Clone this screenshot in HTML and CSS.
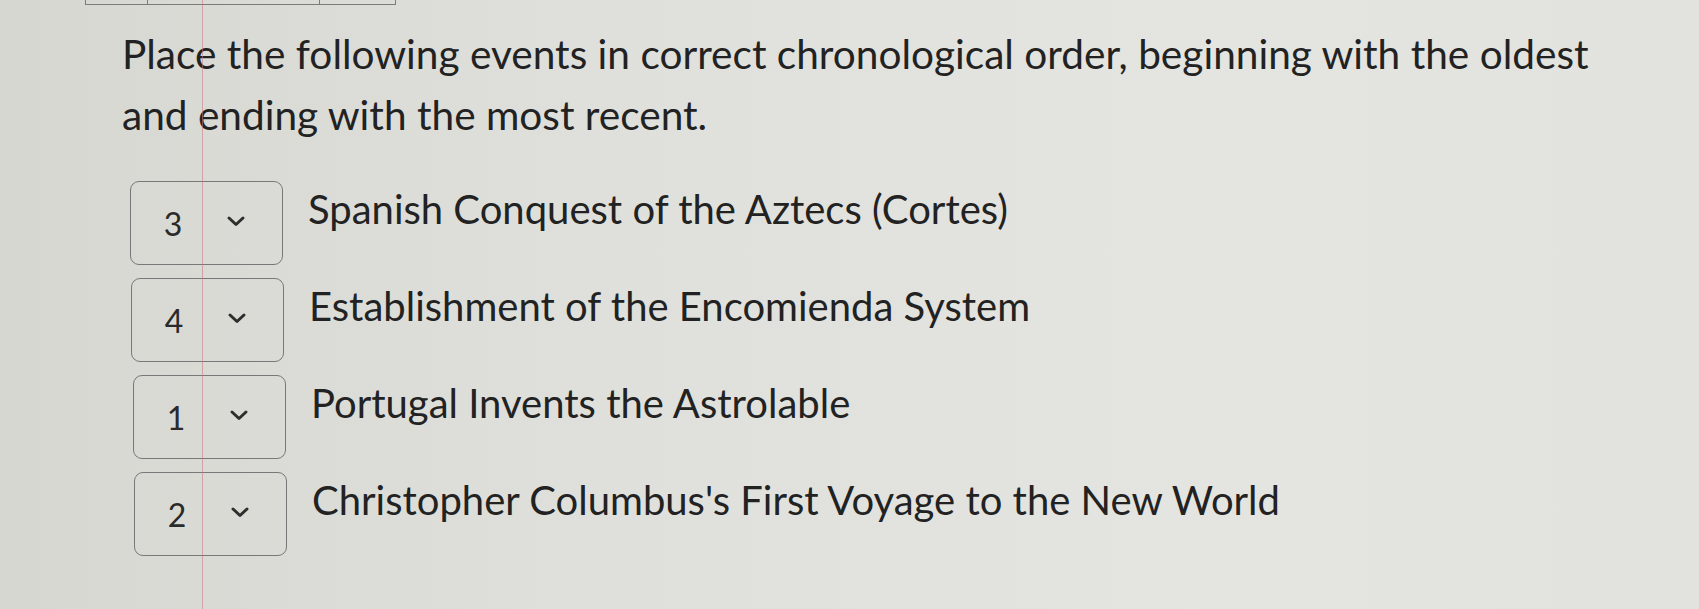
FILE: index.html
```html
<!DOCTYPE html>
<html lang="en">
<head>
  <meta charset="UTF-8" />
  <meta name="viewport" content="width=device-width, initial-scale=1.0"/>
  <title>Ordering Question</title>
  <link rel="stylesheet" href="styles.css">
</head>
<body>

  <!-- Bottom edge of the tab strip above the question -->
  <div class="tab-strip">
    <span class="tab tab-a"></span>
    <span class="tab tab-b"></span>
    <span class="tab tab-c"></span>
  </div>

  <div class="question">
    <p class="prompt">Place the following events in correct chronological order, beginning with the oldest and ending with the most recent.</p>

    <div class="order-list">
      <div class="order-item">
        <div class="order-select">
          <span class="order-value">3</span>
          <svg class="chevron" viewBox="0 0 24 15" width="24" height="15"><path d="M5 4 L12 10.5 L19 4"/></svg>
        </div>
        <span class="order-label">Spanish Conquest of the Aztecs (Cortes)</span>
      </div>

      <div class="order-item">
        <div class="order-select">
          <span class="order-value">4</span>
          <svg class="chevron" viewBox="0 0 24 15" width="24" height="15"><path d="M5 4 L12 10.5 L19 4"/></svg>
        </div>
        <span class="order-label">Establishment of the Encomienda System</span>
      </div>

      <div class="order-item">
        <div class="order-select">
          <span class="order-value">1</span>
          <svg class="chevron" viewBox="0 0 24 15" width="24" height="15"><path d="M5 4 L12 10.5 L19 4"/></svg>
        </div>
        <span class="order-label">Portugal Invents the Astrolable</span>
      </div>

      <div class="order-item">
        <div class="order-select">
          <span class="order-value">2</span>
          <svg class="chevron" viewBox="0 0 24 15" width="24" height="15"><path d="M5 4 L12 10.5 L19 4"/></svg>
        </div>
        <span class="order-label">Christopher Columbus's First Voyage to the New World</span>
      </div>
    </div>
  </div>

</body>
</html>
```

FILE: styles.css
```css
* {
  margin: 0;
  padding: 0;
  box-sizing: border-box;
  font-family: 'Lato', 'Liberation Sans', sans-serif;
}

body {
  position: relative;
  width: 1699px;
  height: 609px;
  overflow: hidden;
  background: linear-gradient(90deg, #d7d7d2 0%, #dfe0db 35%, #e4e5e0 70%, #e2e3de 100%);
  color: #232323;
}

/* thin pink scan line across the screen */
body::after {
  content: "";
  position: absolute;
  top: 0;
  bottom: 0;
  left: 202px;
  width: 1px;
  background: rgba(196, 120, 128, 0.55);
}

.tab-strip {
  display: flex;
  margin-left: 85px;
  width: 311px;
  height: 5px;
  border: 1.5px solid #7b7b7b;
  border-top: none;
}

.tab {
  height: 100%;
  border-right: 1.5px solid #7b7b7b;
}

.tab-a { width: 62px; }
.tab-b { width: 172px; }
.tab-c { flex: 1; border-right: none; }

.question {
  padding: 18px 0 0 122px;
}

.prompt {
  width: 1500px;
  font-size: 40.6px;
  line-height: 61px;
  color: #222;
}

.order-list {
  display: flex;
  flex-direction: column;
  gap: 13px;
  margin-top: 36px;
  margin-left: 8px;
}

.order-item {
  display: flex;
  align-items: flex-start;
  gap: 25px;
}

.order-item:nth-child(2) { margin-left: 1px; }
.order-item:nth-child(3) { margin-left: 3px; }
.order-item:nth-child(4) { margin-left: 4px; }

.order-select {
  display: flex;
  align-items: center;
  width: 153px;
  height: 84px;
  padding-left: 32px;
  border: 1.5px solid #787878;
  border-radius: 9px;
}

.order-value {
  width: 20px;
  text-align: center;
  font-size: 32px;
  color: #2a2a2a;
}

.chevron {
  margin-left: 41px;
  margin-top: -3px;
  fill: none;
  stroke: #2e2e2e;
  stroke-width: 3;
  stroke-linecap: round;
  stroke-linejoin: round;
}

.order-label {
  padding-top: 4px;
  font-size: 40px;
  line-height: 1.2;
  color: #222;
}
```
